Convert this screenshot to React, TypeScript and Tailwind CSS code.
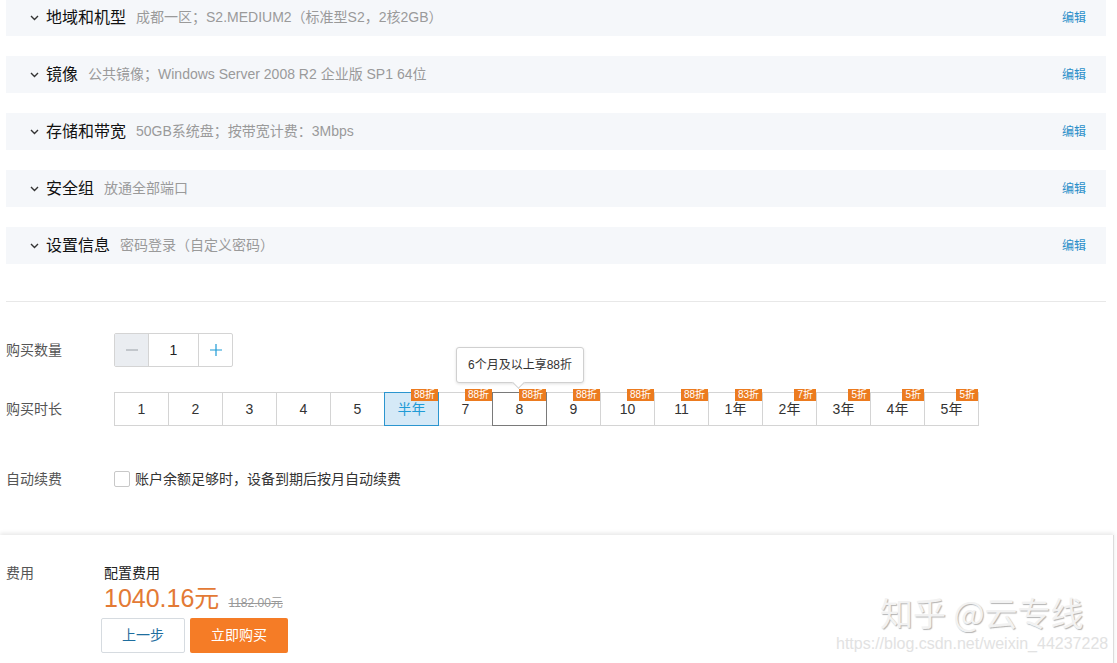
import React from "react";

const font = "font-['Liberation_Sans','Noto_Sans_CJK_SC',sans-serif]";

const panels = [
  { title: "地域和机型", detail: "成都一区；S2.MEDIUM2（标准型S2，2核2GB）" },
  { title: "镜像", detail: "公共镜像；Windows Server 2008 R2 企业版 SP1 64位" },
  { title: "存储和带宽", detail: "50GB系统盘；按带宽计费：3Mbps" },
  { title: "安全组", detail: "放通全部端口" },
  { title: "设置信息", detail: "密码登录（自定义密码）" },
];

const durations: { label: string; badge?: string }[] = [
  { label: "1" },
  { label: "2" },
  { label: "3" },
  { label: "4" },
  { label: "5" },
  { label: "半年", badge: "88折" },
  { label: "7", badge: "88折" },
  { label: "8", badge: "88折" },
  { label: "9", badge: "88折" },
  { label: "10", badge: "88折" },
  { label: "11", badge: "88折" },
  { label: "1年", badge: "83折" },
  { label: "2年", badge: "7折" },
  { label: "3年", badge: "5折" },
  { label: "4年", badge: "5折" },
  { label: "5年", badge: "5折" },
];

function Chevron() {
  return (
    <svg width="9" height="6" viewBox="0 0 9 6" className="shrink-0">
      <path d="M1 1 L4.5 4.5 L8 1" fill="none" stroke="#333" strokeWidth="1.4" />
    </svg>
  );
}

function Panel({ title, detail }: { title: string; detail: string }) {
  return (
    <div className="h-[37px] bg-[#f5f7fa] flex items-center pl-[24px] pr-[20px]">
      <Chevron />
      <span className="ml-[7px] text-[16px] text-[#111]">{title}</span>
      <span className="ml-[10px] text-[14px] text-[#9a9a9a]">{detail}</span>
      <span className="ml-auto text-[12px] text-[#2b8fc9]">编辑</span>
    </div>
  );
}

export default function App() {
  return (
    <div className={`relative w-[1117px] h-[663px] overflow-hidden bg-white ${font}`}>
      <div className="pl-[6px] w-[1106px] -mt-px flex flex-col gap-[20px]">
        {panels.map((p) => (
          <Panel key={p.title} {...p} />
        ))}
      </div>

      <div className="ml-[6px] w-[1100px] mt-[37px] h-px bg-[#e8e8e8]" />

      <div className="pl-[6px] mt-[31px] flex items-center">
        <span className="w-[108px] text-[14px] text-[#555]">购买数量</span>
        <div className="flex h-[34px] border border-[#d4d4d4] rounded-[2px]">
          <div className="w-[34px] flex items-center justify-center bg-[#eaedf1] border-r border-[#d4d4d4]">
            <svg width="12" height="12" viewBox="0 0 12 12">
              <path d="M0 6 H12" stroke="#9aa0a6" strokeWidth="1" />
            </svg>
          </div>
          <div className="w-[50px] flex items-center justify-center border-r border-[#d4d4d4] text-[14px] text-[#222]">
            1
          </div>
          <div className="w-[33px] flex items-center justify-center">
            <svg width="12" height="12" viewBox="0 0 12 12">
              <path d="M0 6 H12 M6 0 V12" stroke="#1f9bd6" strokeWidth="1.2" />
            </svg>
          </div>
        </div>
      </div>

      <div className="pl-[6px] mt-[25px] flex items-center">
        <span className="w-[108px] text-[14px] text-[#555]">购买时长</span>
        <div className="relative flex h-[34px] pl-px">
          {durations.map((d) => {
            const selected = d.label === "半年";
            const hover = d.label === "8";
            return (
              <div
                key={d.label}
                className={`relative w-[55px] h-[34px] -ml-px flex items-center justify-center text-[14px] border ${
                  selected
                    ? "z-10 bg-[#d5e9f7] text-[#1f9bd6] border-[#2b95cf]"
                    : hover
                    ? "z-10 bg-white text-[#333] border-[#7a7a7a]"
                    : "bg-white text-[#333] border-[#d4d4d4]"
                }`}
              >
                {d.label}
                {d.badge && (
                  <span className="absolute right-0 -top-[4px] h-[12px] px-[3px] bg-[#ec7b1f] text-white text-[10px] leading-[12px]">
                    {d.badge}
                  </span>
                )}
              </div>
            );
          })}

          <div className="absolute z-30 left-[342px] -top-[45px] h-[36px] px-[11px] flex items-center bg-white border border-[#d0d0d0] rounded-[3px] shadow-[0_1px_3px_rgba(0,0,0,0.12)] text-[12px] text-[#333] whitespace-nowrap">
            6个月及以上享88折
            <span className="absolute left-[57px] -bottom-[5px] w-[9px] h-[9px] bg-white border-r border-b border-[#d0d0d0] rotate-45" />
          </div>
        </div>
      </div>

      <div className="pl-[6px] mt-[45px] flex items-center h-[16px]">
        <span className="w-[108px] text-[14px] text-[#555]">自动续费</span>
        <span className="w-[16px] h-[16px] border border-[#c8c8c8] rounded-[2px] bg-white" />
        <span className="ml-[5px] text-[14px] text-[#333]">账户余额足够时，设备到期后按月自动续费</span>
      </div>

      <div className="mt-[48px] w-[1114px] h-[140px] bg-white border-r border-[#dcdcdc] shadow-[0_-2px_4px_rgba(0,0,0,0.09)] pt-[28px] pl-[6px] flex">
        <span className="w-[98px] text-[14px] text-[#555] leading-[20px]">费用</span>
        <div className="flex flex-col">
          <span className="text-[14px] text-[#222] leading-[20px]">配置费用</span>
          <div className="flex items-baseline h-[30px]">
            <span className="text-[25px] text-[#e37a35] leading-[30px]">1040.16元</span>
            <span className="ml-[9px] text-[12px] text-[#999] line-through">1182.00元</span>
          </div>
          <div className="flex gap-[5px] mt-[5px] -ml-[3px]">
            <button className="w-[84px] h-[35px] border border-[#d6dbe0] bg-white text-[14px] text-[#1f6e9e] rounded-[2px]">
              上一步
            </button>
            <button className="w-[98px] h-[35px] bg-[#f57c26] text-[14px] text-white rounded-[2px]">
              立即购买
            </button>
          </div>
        </div>
      </div>

      <div className="absolute left-[880px] top-[592px] text-[33px] leading-[40px] text-[#f2f2f2] [text-shadow:1px_1px_1px_#b4b4b4] font-['Noto_Sans_CJK_SC',sans-serif] whitespace-nowrap">
        知乎 @云专线
      </div>
      <div className="absolute left-[836px] top-[634px] text-[16px] leading-[20px] text-[#e2e2e2] whitespace-nowrap">
        https://blog.csdn.net/weixin_44237228
      </div>
    </div>
  );
}
